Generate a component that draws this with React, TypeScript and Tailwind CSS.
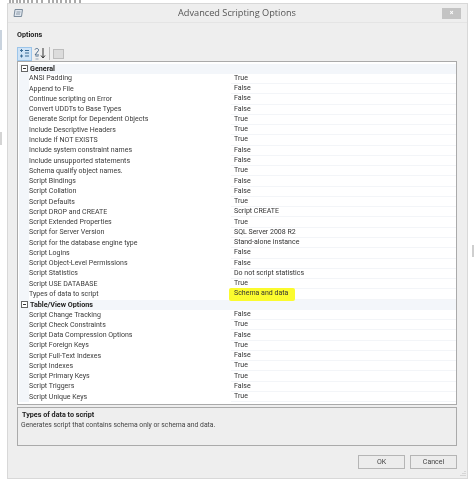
const general: [string, string][] = [
  ["ANSI Padding", "True"],
  ["Append to File", "False"],
  ["Continue scripting on Error", "False"],
  ["Convert UDDTs to Base Types", "False"],
  ["Generate Script for Dependent Objects", "True"],
  ["Include Descriptive Headers", "True"],
  ["Include If NOT EXISTS", "True"],
  ["Include system constraint names", "False"],
  ["Include unsupported statements", "False"],
  ["Schema qualify object names.", "True"],
  ["Script Bindings", "False"],
  ["Script Collation", "False"],
  ["Script Defaults", "True"],
  ["Script DROP and CREATE", "Script CREATE"],
  ["Script Extended Properties", "True"],
  ["Script for Server Version", "SQL Server 2008 R2"],
  ["Script for the database engine type", "Stand-alone instance"],
  ["Script Logins", "False"],
  ["Script Object-Level Permissions", "False"],
  ["Script Statistics", "Do not script statistics"],
  ["Script USE DATABASE", "True"],
  ["Types of data to script", "Schema and data"],
];
const table: [string, string][] = [
  ["Script Change Tracking", "False"],
  ["Script Check Constraints", "True"],
  ["Script Data Compression Options", "False"],
  ["Script Foreign Keys", "True"],
  ["Script Full-Text Indexes", "False"],
  ["Script Indexes", "True"],
  ["Script Primary Keys", "True"],
  ["Script Triggers", "False"],
  ["Script Unique Keys", "True"],
];

function Group({ title }: { title: string }) {
  return (
    <div className="flex h-[10.28px] items-center bg-[#f3f6fa]">
      <div className="flex w-[11px] shrink-0 justify-center">
        <svg width="7" height="7" viewBox="0 0 7 7">
          <rect x="0.5" y="0.5" width="6" height="6" fill="#fff" stroke="#666" />
          <path d="M2 3.5H5" stroke="#333" />
        </svg>
      </div>
      <span className="text-[7.2px] leading-none font-bold text-[#222]">{title}</span>
    </div>
  );
}

function Row({ name, value }: { name: string; value: string }) {
  const highlighted = value === "Schema and data";
  return (
    <div className="flex h-[10.28px] items-center">
      <div className="h-full w-[10px] shrink-0 bg-[#f3f6fa]" />
      <div className="w-[202px] shrink-0 text-[7px] leading-none text-[#3a3a3a]">{name}</div>
      <div className="relative flex h-full flex-1 items-center border-b border-[#f3f5f8]">
        {highlighted && <div className="absolute top-[-1px] left-[-2px] h-[13px] w-[66px] rounded-[2px] bg-[#fbfb2e]" />}
        <span className="relative pl-[3px] text-[7px] leading-none text-[#333]">{value}</span>
      </div>
    </div>
  );
}

export default function App() {
  return (
    <div className="relative h-[485px] w-[474px] overflow-hidden bg-white font-['Roboto',sans-serif] blur-[0.3px]">
      <svg className="absolute top-0 left-[9px]" width="76" height="3" viewBox="0 0 76 3">
        <path d="M1 0V3M4 0V3M8 0V3M11 0V3M15 0V3M19 0V3M23 0V3M28 0V3M33 0V3M40 0V3M44 0V3M48 0V3M52 0V3M57 0V3M61 0V3M66 0V3M71 0V3" stroke="#555" />
      </svg>
      <div className="absolute top-[30px] left-0 h-[20px] w-[2px] bg-[#c9d3de]" />
      <div className="absolute top-[132px] left-0 h-[13px] w-[2px] bg-[#d4d4d4]" />
      <div className="absolute top-[245px] right-0 h-[12px] w-[2px] bg-[#cfcfcf]" />
      <div className="ml-[7px] mt-[3px] flex h-[476px] w-[461px] flex-col border border-[#d8d8d8] bg-[#eeeeee]">
        <div className="flex h-[19px] shrink-0 items-center border-b border-[#e4e4e4]">
          <div className="flex w-[20px] justify-center">
            <svg width="11" height="11" viewBox="0 0 11 11">
              <path d="M2 1.5H9.5L8.5 8.5H1Z" fill="#dfe6ee" stroke="#7b8b9b" />
              <path d="M3.5 4H7.5M3 6H7" stroke="#8a98a6" />
            </svg>
          </div>
          <div className="flex-1 pl-[4px] text-center font-['Open_Sans',sans-serif] text-[9.2px] text-[#555]">Advanced Scripting Options</div>
          <div className="mr-[6px] flex h-[11px] w-[19px] items-center justify-center bg-[#c4c4c4] text-[7px] font-bold text-white">×</div>
        </div>
        <div className="relative flex flex-1 flex-col pl-[9px] pr-[10px]">
          <div className="pt-[7px] text-[7.2px] leading-[10px] font-bold text-[#222]">Options</div>
          <div className="mt-[6px] flex h-[15px] items-center">
            <div className="flex h-[14px] w-[15px] items-center justify-center border border-[#9cc5ea] bg-[#cfe3f6]">
              <svg width="9" height="9" viewBox="0 0 9 9">
                <path d="M0 1.5H3M0 7H3M5 1.5H9M5 4H9M5 7H9" stroke="#3a6a94" />
                <path d="M1.5 0V3M1.5 5.5V8.5" stroke="#3a6a94" />
              </svg>
            </div>
            <svg className="ml-[1px]" width="14" height="13" viewBox="0 0 14 13">
              <path d="M2 2.5C2.5 1 6 1 5.5 3.5L2 8H6" fill="none" stroke="#4a6a8a" />
              <path d="M2.5 9.5H5.5M2.5 12H5.5" stroke="#9ab" />
              <path d="M10 1V10.5M8 8.5L10 11L12 8.5" fill="none" stroke="#333" />
            </svg>
            <div className="ml-[2px] h-[13px] w-px bg-[#bbbbbb]" />
            <div className="ml-[3px] h-[10px] w-[11px] border border-[#bdbdbd] bg-[#dcdcdc]" />
          </div>
          <div className="h-[344px] border border-[#aaaaaa] bg-white pt-[1.5px] pl-[1px]">
            <Group title="General" />
            {general.map(([n, v]) => <Row key={n} name={n} value={v} />)}
            <Group title="Table/View Options" />
            {table.map(([n, v]) => <Row key={n} name={n} value={v} />)}
          </div>
          <div className="mt-[2px] h-[39px] border border-[#aaaaaa] bg-[#eeeeee] pt-[2px] pl-[3px] text-[6.8px] leading-[10px]">
            <div className="pl-[1px] text-[7.2px] font-bold text-[#222]">Types of data to script</div>
            <div className="text-[#444]">Generates script that contains schema only or schema and data.</div>
          </div>
          <div className="mt-[9px] flex justify-end gap-[5px]">
            <button className="h-[14px] w-[47px] border border-[#b5b5b5] bg-[#ececec] text-[7px] leading-none text-[#444]">OK</button>
            <button className="h-[14px] w-[47px] border border-[#b5b5b5] bg-[#ececec] text-[7px] leading-none text-[#444]">Cancel</button>
          </div>
          <svg className="absolute right-[1px] bottom-[1px]" width="7" height="7" viewBox="0 0 7 7">
            <path d="M6 1V2M4 3V4M6 3V4M2 5V6M4 5V6M6 5V6" stroke="#bdbdbd" />
          </svg>
        </div>
      </div>
    </div>
  );
}
